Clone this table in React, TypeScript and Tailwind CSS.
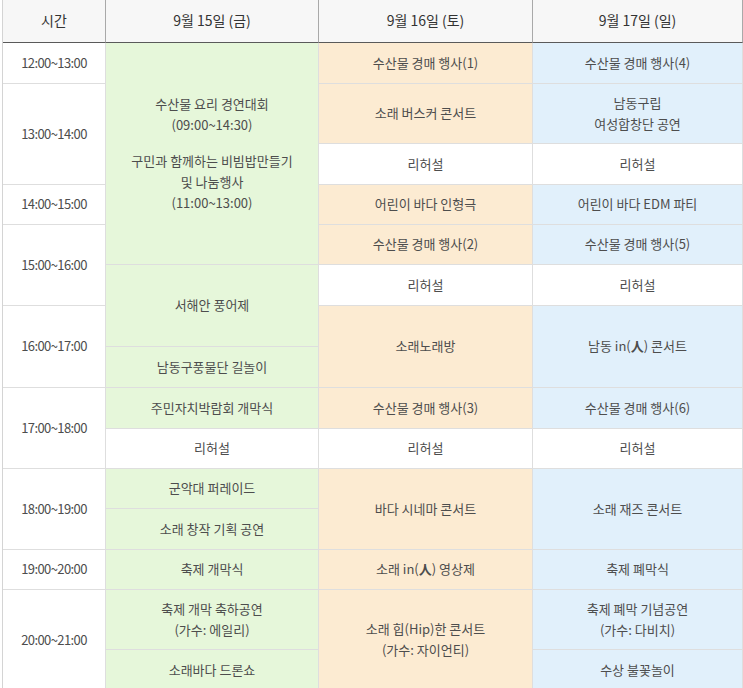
import React from "react";

type Cell = {
  pos: string;
  tone?: "time" | "green" | "orange" | "blue" | "white";
  lines: React.ReactNode[];
};

const In = () => (
  <>
    in(<span className="font-bold">人</span>)
  </>
);

const toneClass = {
  time: "bg-white text-[13px] tracking-[-0.6px]",
  green: "bg-[#e6f7da]",
  orange: "bg-[#fcebd2]",
  blue: "bg-[#e1f0fb]",
  white: "bg-white",
};

const cells: Cell[] = [
  // time column
  { pos: "col-start-1 row-start-2", tone: "time", lines: ["12:00~13:00"] },
  { pos: "col-start-1 row-start-3 row-span-2", tone: "time", lines: ["13:00~14:00"] },
  { pos: "col-start-1 row-start-5", tone: "time", lines: ["14:00~15:00"] },
  { pos: "col-start-1 row-start-6 row-span-2", tone: "time", lines: ["15:00~16:00"] },
  { pos: "col-start-1 row-start-8 row-span-2", tone: "time", lines: ["16:00~17:00"] },
  { pos: "col-start-1 row-start-10 row-span-2", tone: "time", lines: ["17:00~18:00"] },
  { pos: "col-start-1 row-start-12 row-span-2", tone: "time", lines: ["18:00~19:00"] },
  { pos: "col-start-1 row-start-14", tone: "time", lines: ["19:00~20:00"] },
  { pos: "col-start-1 row-start-15 row-span-2", tone: "time", lines: ["20:00~21:00"] },

  // 9/15
  {
    pos: "col-start-2 row-start-2 row-span-5",
    tone: "green",
    lines: ["수산물 요리 경연대회", "(09:00~14:30)", null, "구민과 함께하는 비빔밥만들기", "및 나눔행사", "(11:00~13:00)"],
  },
  { pos: "col-start-2 row-start-7 row-span-2", tone: "green", lines: ["서해안 풍어제"] },
  { pos: "col-start-2 row-start-9", tone: "green", lines: ["남동구풍물단 길놀이"] },
  { pos: "col-start-2 row-start-10", tone: "green", lines: ["주민자치박람회 개막식"] },
  { pos: "col-start-2 row-start-11", tone: "white", lines: ["리허설"] },
  { pos: "col-start-2 row-start-12", tone: "green", lines: ["군악대 퍼레이드"] },
  { pos: "col-start-2 row-start-13", tone: "green", lines: ["소래 창작 기획 공연"] },
  { pos: "col-start-2 row-start-14", tone: "green", lines: ["축제 개막식"] },
  { pos: "col-start-2 row-start-15", tone: "green", lines: ["축제 개막 축하공연", "(가수: 에일리)"] },
  { pos: "col-start-2 row-start-16", tone: "green", lines: ["소래바다 드론쇼"] },

  // 9/16
  { pos: "col-start-3 row-start-2", tone: "orange", lines: ["수산물 경매 행사(1)"] },
  { pos: "col-start-3 row-start-3", tone: "orange", lines: ["소래 버스커 콘서트"] },
  { pos: "col-start-3 row-start-4", tone: "white", lines: ["리허설"] },
  { pos: "col-start-3 row-start-5", tone: "orange", lines: ["어린이 바다 인형극"] },
  { pos: "col-start-3 row-start-6", tone: "orange", lines: ["수산물 경매 행사(2)"] },
  { pos: "col-start-3 row-start-7", tone: "white", lines: ["리허설"] },
  { pos: "col-start-3 row-start-8 row-span-2", tone: "orange", lines: ["소래노래방"] },
  { pos: "col-start-3 row-start-10", tone: "orange", lines: ["수산물 경매 행사(3)"] },
  { pos: "col-start-3 row-start-11", tone: "white", lines: ["리허설"] },
  { pos: "col-start-3 row-start-12 row-span-2", tone: "orange", lines: ["바다 시네마 콘서트"] },
  { pos: "col-start-3 row-start-14", tone: "orange", lines: [<>소래 <In /> 영상제</>] },
  { pos: "col-start-3 row-start-15 row-span-2", tone: "orange", lines: ["소래 힙(Hip)한 콘서트", "(가수: 자이언티)"] },

  // 9/17
  { pos: "col-start-4 row-start-2", tone: "blue", lines: ["수산물 경매 행사(4)"] },
  { pos: "col-start-4 row-start-3", tone: "blue", lines: ["남동구립", "여성합창단 공연"] },
  { pos: "col-start-4 row-start-4", tone: "white", lines: ["리허설"] },
  { pos: "col-start-4 row-start-5", tone: "blue", lines: ["어린이 바다 EDM 파티"] },
  { pos: "col-start-4 row-start-6", tone: "blue", lines: ["수산물 경매 행사(5)"] },
  { pos: "col-start-4 row-start-7", tone: "white", lines: ["리허설"] },
  { pos: "col-start-4 row-start-8 row-span-2", tone: "blue", lines: [<>남동 <In /> 콘서트</>] },
  { pos: "col-start-4 row-start-10", tone: "blue", lines: ["수산물 경매 행사(6)"] },
  { pos: "col-start-4 row-start-11", tone: "white", lines: ["리허설"] },
  { pos: "col-start-4 row-start-12 row-span-2", tone: "blue", lines: ["소래 재즈 콘서트"] },
  { pos: "col-start-4 row-start-14", tone: "blue", lines: ["축제 폐막식"] },
  { pos: "col-start-4 row-start-15", tone: "blue", lines: ["축제 폐막 기념공연", "(가수: 다비치)"] },
  { pos: "col-start-4 row-start-16", tone: "blue", lines: ["수상 불꽃놀이"] },
];

const headers = ["시간", "9월 15일 (금)", "9월 16일 (토)", "9월 17일 (일)"];

export default function App() {
  return (
    <div
      className="h-[688px] w-[743px] overflow-hidden bg-white text-[#4d4d4d]"
      style={{ fontFamily: '"Noto Sans CJK KR", "Noto Sans", sans-serif' }}
    >
      <div className="ml-[2px] grid grid-cols-[103px_213px_214px_1fr] grid-rows-[43px_41px_60px_41px_40px_40px_41px_41px_41px_41px_40px_40px_41px_40px_60px_41px] border-l border-[#d4d4d4]">
        {headers.map((h) => (
          <div
            key={h}
            className="flex items-center justify-center border-b border-r border-b-[#5a5a5a] border-r-[#a9a9a9] bg-[#f7f7f7] pb-[2px] text-[14px] text-[#333]"
          >
            {h}
          </div>
        ))}
        {cells.map((c, i) => (
          <div
            key={i}
            className={`${c.pos} ${toneClass[c.tone ?? "white"]} flex flex-col items-center justify-center border-b border-r border-[#dedede] pb-[2px] text-center text-[13px] leading-[21px]`}
          >
            {c.lines.map((l, j) =>
              l === null ? <div key={j} className="h-[15px]" /> : <div key={j}>{l}</div>
            )}
          </div>
        ))}
      </div>
    </div>
  );
}
